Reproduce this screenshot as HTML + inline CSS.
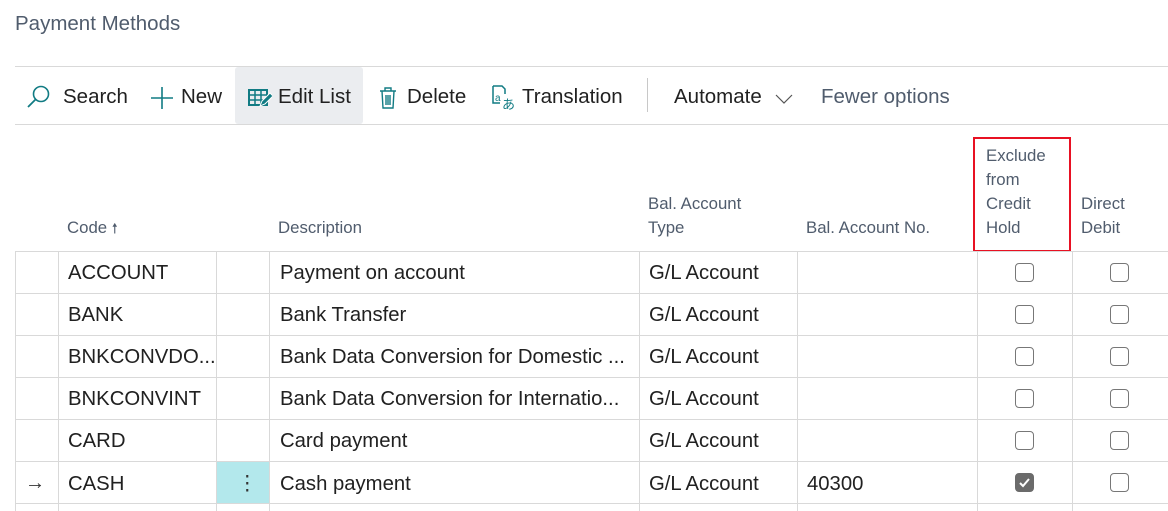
<!DOCTYPE html>
<html><head><meta charset="utf-8"><style>
body{margin:0;width:1168px;height:511px;background:#fff;font-family:"Liberation Sans",sans-serif;position:relative;overflow:hidden;color:#212121}
.a{position:absolute;white-space:nowrap}
.t{font-size:20.5px;color:#505c6d}
.tb{font-size:20.5px;color:#212121;top:85px}
.h{font-size:16.8px;color:#505c6d;line-height:24px}
.c{font-size:20.3px;color:#212121}
.hl{position:absolute;left:15px;width:1153px;height:1px;background:#d9d9d9}
.vl{position:absolute;width:1px;background:#d9d9d9}
.cb{position:absolute;width:19px;height:19px;border:1.5px solid #777;border-radius:4px;box-sizing:border-box}
</style></head><body>
<div class="a t" style="left:15px;top:12px">Payment Methods</div>
<div class="hl" style="top:66px"></div>
<div class="hl" style="top:124px"></div>
<div class="a" style="left:235px;top:67px;width:128px;height:57px;background:#ebedf0;border-radius:3px"></div>
<svg class="a" style="left:26px;top:84px" width="26" height="26" viewBox="0 0 26 26"><circle cx="15" cy="10" r="7.5" fill="none" stroke="#117b83" stroke-width="1.6"/><line x1="9.5" y1="15.5" x2="2" y2="23" stroke="#117b83" stroke-width="1.8"/></svg>
<div class="a tb" style="left:63px">Search</div>
<svg class="a" style="left:150px;top:86px" width="24" height="24"><path d="M12 1v22M1 12h22" stroke="#117b83" stroke-width="1.6"/></svg>
<div class="a tb" style="left:181px">New</div>
<svg class="a" style="left:248px;top:88px" width="24" height="20"><rect x="1" y="2" width="18" height="15" fill="none" stroke="#117b83" stroke-width="2"/><path d="M1 7h18M1 12h18M7 2v15M13 2v15" stroke="#117b83" stroke-width="1.5"/><path d="M12 18l2-5 8-8 3 3-8 8z" fill="#117b83" stroke="#fff" stroke-width="1"/></svg>
<div class="a tb" style="left:278px">Edit List</div>
<svg class="a" style="left:378px;top:86px" width="20" height="24"><path d="M2 5h16M7 5V2h6v3M4 5l1 17h10l1-17M8 9v10M10 9v10M12 9v10" fill="none" stroke="#117b83" stroke-width="1.4"/></svg>
<div class="a tb" style="left:407px">Delete</div>
<svg class="a" style="left:491px;top:84px" width="26" height="26"><path d="M2 2h9l3 3v5M2 2v17h7" fill="none" stroke="#117b83" stroke-width="1.5"/><text x="4" y="17" font-size="10" fill="#117b83" font-family="Liberation Sans">a</text><text x="11" y="25" font-size="13" fill="#117b83" font-family="Noto Sans CJK JP,sans-serif">あ</text></svg>
<div class="a tb" style="left:522px">Translation</div>
<div class="a" style="left:647px;top:78px;width:1px;height:34px;background:#c8c8c8"></div>
<div class="a tb" style="left:674px">Automate</div>
<svg class="a" style="left:775px;top:93px" width="18" height="12"><path d="M1 2l8 8 8-8" fill="none" stroke="#555" stroke-width="1.2"/></svg>
<div class="a tb" style="left:821px;color:#505c6d">Fewer options</div>

<div class="a h" style="left:67px;top:216px">Code <span style="font-size:14px">🠕</span></div>
<div class="a h" style="left:278px;top:216px">Description</div>
<div class="a h" style="left:648px;top:192px">Bal. Account<br>Type</div>
<div class="a h" style="left:806px;top:216px">Bal. Account No.</div>
<div class="a h" style="left:986px;top:144px">Exclude<br>from<br>Credit<br>Hold</div>
<div class="a h" style="left:1081px;top:192px">Direct<br>Debit</div>
<div class="a" style="left:973px;top:137px;width:94px;height:111px;border:2px solid #e81123"></div>

<div class="hl" style="top:251px"></div>
<div class="hl" style="top:293px"></div>
<div class="hl" style="top:335px"></div>
<div class="hl" style="top:377px"></div>
<div class="hl" style="top:419px"></div>
<div class="hl" style="top:461px"></div>
<div class="hl" style="top:503px"></div>
<div class="vl" style="left:15px;top:251px;height:260px"></div>
<div class="vl" style="left:58px;top:251px;height:260px"></div>
<div class="vl" style="left:216px;top:251px;height:260px"></div>
<div class="vl" style="left:269px;top:251px;height:260px"></div>
<div class="vl" style="left:639px;top:251px;height:260px"></div>
<div class="vl" style="left:797px;top:251px;height:260px"></div>
<div class="vl" style="left:977px;top:251px;height:260px"></div>
<div class="vl" style="left:1072px;top:251px;height:260px"></div>
<div class="a" style="left:217px;top:462px;width:52px;height:41px;background:#b3e8ec"></div>
<div class="a c" style="left:237px;top:471px;color:#333">⋮</div>
<div class="a c" style="left:25px;top:472px;color:#333">→</div>

<div class="a c" style="left:68px;top:262px">ACCOUNT</div><div class="a c" style="left:280px;top:262px">Payment on account</div><div class="a c" style="left:649px;top:262px">G/L Account</div>
<div class="a c" style="left:68px;top:304px">BANK</div><div class="a c" style="left:280px;top:304px">Bank Transfer</div><div class="a c" style="left:649px;top:304px">G/L Account</div>
<div class="a c" style="left:68px;top:346px">BNKCONVDO...</div><div class="a c" style="left:280px;top:346px">Bank Data Conversion for Domestic ...</div><div class="a c" style="left:649px;top:346px">G/L Account</div>
<div class="a c" style="left:68px;top:388px">BNKCONVINT</div><div class="a c" style="left:280px;top:388px">Bank Data Conversion for Internatio...</div><div class="a c" style="left:649px;top:388px">G/L Account</div>
<div class="a c" style="left:68px;top:430px">CARD</div><div class="a c" style="left:280px;top:430px">Card payment</div><div class="a c" style="left:649px;top:430px">G/L Account</div>
<div class="a c" style="left:68px;top:473px">CASH</div><div class="a c" style="left:280px;top:473px">Cash payment</div><div class="a c" style="left:649px;top:473px">G/L Account</div><div class="a c" style="left:807px;top:473px">40300</div>

<div class="cb" style="left:1015px;top:263px"></div><div class="cb" style="left:1110px;top:263px"></div>
<div class="cb" style="left:1015px;top:305px"></div><div class="cb" style="left:1110px;top:305px"></div>
<div class="cb" style="left:1015px;top:347px"></div><div class="cb" style="left:1110px;top:347px"></div>
<div class="cb" style="left:1015px;top:389px"></div><div class="cb" style="left:1110px;top:389px"></div>
<div class="cb" style="left:1015px;top:431px"></div><div class="cb" style="left:1110px;top:431px"></div>
<div class="cb" style="left:1015px;top:473px;background:#6b6b6b;border-color:#6b6b6b"></div><div class="cb" style="left:1110px;top:473px"></div>
<svg class="a" style="left:1015px;top:473px" width="19" height="19"><path d="M5 10l3 3 6-7" fill="none" stroke="#fff" stroke-width="2"/></svg>
</body></html>
